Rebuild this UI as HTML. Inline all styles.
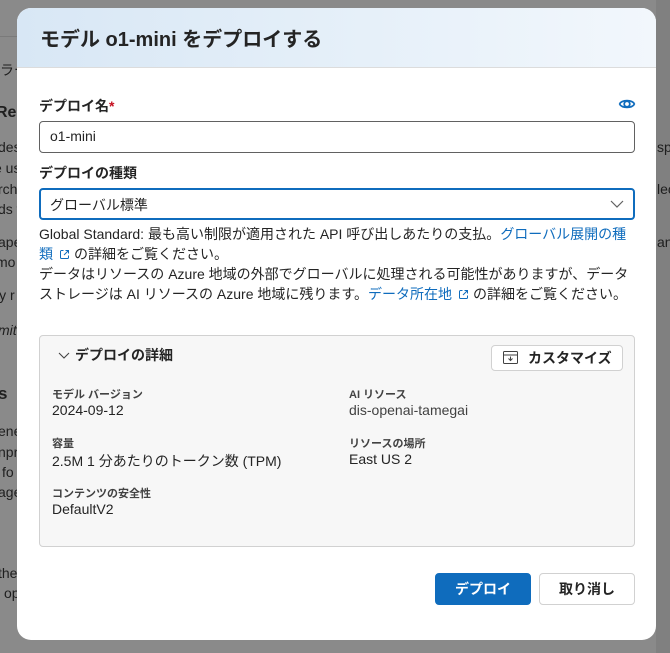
<!DOCTYPE html>
<html><head><meta charset="utf-8"><style>
*{box-sizing:border-box;margin:0;padding:0}
body{width:670px;height:653px;overflow:hidden;background:#8a8a8a;font-family:"Segoe UI","Liberation Sans","Noto Sans CJK JP",sans-serif;color:#242424;position:relative}
.bg{position:absolute;font-size:14px;color:#1e1e1e;white-space:nowrap}
.topline{position:absolute;left:0;right:0;top:36px;height:1px;background:#7a7a7a}
.rs{position:absolute;left:656px;top:0;width:14px;height:653px;background:#808080}
.dlg{position:absolute;left:17px;top:8px;width:639px;height:632px;background:#fff;border-radius:14px;overflow:hidden}
.hd{height:60px;background:linear-gradient(90deg,#d8e7f5 0%,#e6f0f9 55%,#f2f7fc 100%);border-bottom:1px solid #dcdcdc;padding:15px 0 0 23px;font-size:20px;font-weight:bold;color:#242424}
.lbl{position:absolute;left:22px;font-size:14px;font-weight:bold}
.inp{position:absolute;left:22px;width:596px;height:32px;border:1px solid #616161;border-radius:4px;font-size:14px;padding:6px 10px}
.sel{border:2px solid #0f6cbd;padding:5px 9px}
.desc{position:absolute;left:22px;top:216px;width:600px;font-size:14px;line-height:20px;color:#242424}
a{color:#0f6cbd;text-decoration:none}
.ext{display:inline-block;margin:0 4px 0 6px;vertical-align:-1px}
.box{position:absolute;left:22px;top:327px;width:596px;height:212px;background:#f7f7f7;border:1px solid #d1d1d1;border-radius:4px}
.k{position:absolute;font-size:11px;font-weight:bold;color:#424242}
.v{position:absolute;font-size:14px}
.btn{position:absolute;top:565px;height:32px;border-radius:4px;font-size:14px;font-weight:bold;text-align:center;line-height:30px}
</style></head><body>
<div class="topline"></div>
<div class="bg" style="left:0;top:60px">ラー</div>
<div class="bg" style="left:-4px;top:104px;font-weight:bold;font-size:16px">Rea</div>
<div class="bg" style="left:-2px;top:139px">des</div>
<div class="bg" style="left:-6px;top:160px">e us</div>
<div class="bg" style="left:-2px;top:181px">rch</div>
<div class="bg" style="left:-2px;top:201px">ds t</div>
<div class="bg" style="left:-2px;top:234px">ape</div>
<div class="bg" style="left:-4px;top:254px">mo</div>
<div class="bg" style="left:-4px;top:287px">ly r</div>
<div class="bg" style="left:-2px;top:322px;font-style:italic">mite</div>
<div class="bg" style="left:-2px;top:384px;font-weight:bold;font-size:17px">s</div>
<div class="bg" style="left:-2px;top:423px">ene</div>
<div class="bg" style="left:-2px;top:444px">npr</div>
<div class="bg" style="left:2px;top:464px">fo</div>
<div class="bg" style="left:-2px;top:484px">age</div>
<div class="bg" style="left:-2px;top:565px">the</div>
<div class="bg" style="left:4px;top:585px">op</div>
<div class="rs"></div>
<div class="bg" style="left:657px;top:139px">sp</div>
<div class="bg" style="left:657px;top:181px">lec</div>
<div class="bg" style="left:657px;top:234px">an</div>
<div class="dlg">
<div class="hd">モデル o1-mini をデプロイする</div>
<div class="lbl" style="top:88px">デプロイ名<span style="color:#c50f1f">*</span></div>
<svg style="position:absolute;left:601px;top:90px" width="18" height="12" viewBox="0 0 18 12"><path d="M1.5 6C4 1.5 14 1.5 16.5 6" fill="none" stroke="#0f6cbd" stroke-width="1.8"/><path d="M1.5 6C4 10.5 14 10.5 16.5 6" fill="none" stroke="#0f6cbd" stroke-width="1.8"/><circle cx="9" cy="6" r="2.8" fill="none" stroke="#0f6cbd" stroke-width="1.8"/></svg>
<div class="inp" style="top:113px">o1-mini</div>
<div class="lbl" style="top:155px">デプロイの種類</div>
<div class="inp sel" style="top:180px;height:32px">グローバル標準<svg style="position:absolute;right:9px;top:9px" width="14" height="10" viewBox="0 0 14 10"><path d="M1 2l6 6 6-6" fill="none" stroke="#616161" stroke-width="1.2"/></svg></div>
<div class="desc">Global Standard: 最も高い制限が適用された API 呼び出しあたりの支払。<a>グローバル展開の種類</a><svg class="ext" width="11" height="11" viewBox="0 0 11 11"><path d="M4.5 1.5H2.5a1 1 0 0 0-1 1v6a1 1 0 0 0 1 1h6a1 1 0 0 0 1-1V6.5M6.5 1.5h3v3M9.5 1.5L5 6" fill="none" stroke="#0f6cbd" stroke-width="1"/></svg>の詳細をご覧ください。<br>データはリソースの Azure 地域の外部でグローバルに処理される可能性がありますが、データストレージは AI リソースの Azure 地域に残ります。<a>データ所在地</a><svg class="ext" width="11" height="11" viewBox="0 0 11 11"><path d="M4.5 1.5H2.5a1 1 0 0 0-1 1v6a1 1 0 0 0 1 1h6a1 1 0 0 0 1-1V6.5M6.5 1.5h3v3M9.5 1.5L5 6" fill="none" stroke="#0f6cbd" stroke-width="1"/></svg>の詳細をご覧ください。</div>
<div class="box">
<svg style="position:absolute;left:18px;top:15px" width="12" height="10" viewBox="0 0 12 10"><path d="M1 2l5 5 5-5" fill="none" stroke="#424242" stroke-width="1.1"/></svg>
<div style="position:absolute;left:35px;top:9px;font-size:14px;font-weight:bold">デプロイの詳細</div>
<div style="position:absolute;left:451px;top:9px;width:132px;height:26px;border:1px solid #d1d1d1;border-radius:4px;background:#fff;font-size:14px;font-weight:bold;padding:2px 0 0 36px">カスタマイズ</div>
<svg style="position:absolute;left:463px;top:15px" width="15" height="13" viewBox="0 0 15 13"><rect x="0.5" y="0.5" width="14" height="12" rx="1" fill="none" stroke="#424242"/><path d="M0.5 4h14M7.5 5.5v4M5.5 7.5l2 2 2-2" fill="none" stroke="#424242"/></svg>
<div class="k" style="left:12px;top:50px">モデル バージョン</div>
<div class="v" style="left:12px;top:66px">2024-09-12</div>
<div class="k" style="left:309px;top:50px">AI リソース</div>
<div class="v" style="left:309px;top:66px;color:#424242">dis-openai-tamegai</div>
<div class="k" style="left:12px;top:99px">容量</div>
<div class="v" style="left:12px;top:115px">2.5M 1 分あたりのトークン数 (TPM)</div>
<div class="k" style="left:309px;top:99px">リソースの場所</div>
<div class="v" style="left:309px;top:115px">East US 2</div>
<div class="k" style="left:12px;top:149px">コンテンツの安全性</div>
<div class="v" style="left:12px;top:165px">DefaultV2</div>
</div>
<div class="btn" style="left:418px;width:96px;background:#0f6cbd;color:#fff;border:1px solid #0f6cbd">デプロイ</div>
<div class="btn" style="left:522px;width:96px;background:#fff;border:1px solid #d1d1d1">取り消し</div>
</div>
</body></html>
